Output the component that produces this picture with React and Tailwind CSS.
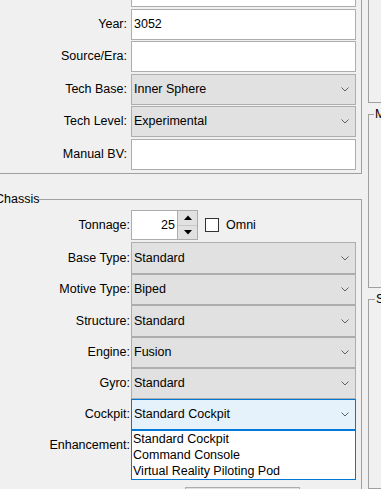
import React from "react";

const FIELD_BORDER = "border border-[#adadad]";

function Chevron() {
  return (
    <svg width="8" height="5" viewBox="0 0 8 5" className="shrink-0">
      <polyline points="0.5,0.5 4,4 7.5,0.5" fill="none" stroke="#606060" strokeWidth="1" />
    </svg>
  );
}

function TextField({ value }) {
  return (
    <div className={`w-[225px] h-full bg-white ${FIELD_BORDER} flex items-center pl-[2px]`}>
      {value}
    </div>
  );
}

function Combo({ value, active }) {
  return (
    <div
      className={`w-[225px] h-full flex items-center justify-between pl-[2px] pr-[6px] border ${
        active ? "bg-[#e5f1fb] border-[#0078d7]" : "bg-[#e1e1e1] border-[#adadad]"
      }`}
    >
      <span>{value}</span>
      <Chevron />
    </div>
  );
}

function InfoRow({ label, children, className = "" }) {
  return (
    <div className={`flex items-center h-[31px] ${className}`}>
      <div className="w-[127px] text-right">{label}</div>
      <div className="ml-[4px] h-full">{children}</div>
    </div>
  );
}

function ChassisRow({ label, children, className = "" }) {
  return (
    <div className={`flex items-center ${className}`}>
      <div className="w-[135px] text-right">{label}</div>
      <div className="ml-[1px] h-full relative">{children}</div>
    </div>
  );
}

function Spinner({ value }) {
  return (
    <div className="flex h-[30px]">
      <div className="w-[46px] h-full bg-white border border-[#adadad] border-r-0 flex items-center justify-end pr-[2px]">
        {value}
      </div>
      <div className="w-[21px] h-full flex flex-col border border-[#adadad] bg-[#e1e1e1]">
        <div className="flex-1 flex items-center justify-center border-b border-[#c8c8c8]">
          <svg width="8" height="5" viewBox="0 0 8 5">
            <polygon points="0,5 4,0.5 8,5" fill="#000" />
          </svg>
        </div>
        <div className="flex-1 flex items-center justify-center">
          <svg width="8" height="5" viewBox="0 0 8 5">
            <polygon points="0,0 8,0 4,4.5" fill="#000" />
          </svg>
        </div>
      </div>
    </div>
  );
}

export default function App() {
  const cockpitOptions = ["Standard Cockpit", "Command Console", "Virtual Reality Piloting Pod"];

  return (
    <div className="w-[381px] h-[489px] overflow-hidden bg-[#f0f0f0] flex font-['Liberation_Sans',sans-serif] text-[12.5px] text-black leading-none">
      {/* left column */}
      <div className="w-[362px] shrink-0 flex flex-col">
        {/* info panel */}
        <div className="h-[174px] border-r border-b border-[#a0a0a0] flex flex-col shrink-0">
          <div className="ml-[131px] w-[225px] h-[7px] bg-white border-x border-b border-[#adadad] shrink-0" />
          <InfoRow label="Year:" className="mt-[2px]">
            <TextField value="3052" />
          </InfoRow>
          <InfoRow label="Source/Era:" className="mt-[1px]">
            <TextField value="" />
          </InfoRow>
          <InfoRow label="Tech Base:" className="mt-[2px]">
            <Combo value="Inner Sphere" />
          </InfoRow>
          <InfoRow label="Tech Level:" className="mt-[1px]">
            <Combo value="Experimental" />
          </InfoRow>
          <InfoRow label="Manual BV:" className="mt-[2px]">
            <TextField value="" />
          </InfoRow>
        </div>

        {/* chassis */}
        <fieldset className="mt-[18px] -ml-[12px] w-[374px] flex-1 border border-[#a0a0a0] pl-[6px] pt-[4px]">
          <legend className="leading-[14px]">Chassis</legend>

          <ChassisRow label="Tonnage:" className="h-[30px]">
            <div className="flex items-center h-full">
              <Spinner value="25" />
              <div className="ml-[7px] w-[14px] h-[14px] bg-white border border-[#333333]" />
              <span className="ml-[7px]">Omni</span>
            </div>
          </ChassisRow>

          <ChassisRow label="Base Type:" className="h-[32px] mt-[2px]">
            <Combo value="Standard" />
          </ChassisRow>
          <ChassisRow label="Motive Type:" className="h-[31px]">
            <Combo value="Biped" />
          </ChassisRow>
          <ChassisRow label="Structure:" className="h-[32px]">
            <Combo value="Standard" />
          </ChassisRow>
          <ChassisRow label="Engine:" className="h-[31px]">
            <Combo value="Fusion" />
          </ChassisRow>
          <ChassisRow label="Gyro:" className="h-[31px]">
            <Combo value="Standard" />
          </ChassisRow>
          <ChassisRow label="Cockpit:" className="h-[31px] relative z-10">
            <Combo value="Standard Cockpit" active />
            <div className="absolute left-0 top-full w-[225px] bg-white border border-[#0078d7]">
              {cockpitOptions.map((opt) => (
                <div key={opt} className="h-[16px] flex items-center pl-[1px]">
                  {opt}
                </div>
              ))}
            </div>
          </ChassisRow>
          <ChassisRow label="Enhancement:" className="h-[31px]">
            <Combo value="None" />
          </ChassisRow>
          <div className="ml-[190px] mt-[26px] w-[115px] h-[20px] border-t border-x border-[#adadad] bg-[#e1e1e1]" />
        </fieldset>
      </div>

      {/* right column */}
      <div className="flex-1 flex flex-col pl-[6px]">
        <div className="h-[103px] border-l border-b border-[#a0a0a0] shrink-0" />
        <fieldset className="mt-[4px] h-[181px] border border-[#a0a0a0] pl-[5px] shrink-0">
          <legend className="leading-[14px] px-[1px]">M</legend>
        </fieldset>
        <fieldset className="mt-[4px] flex-1 border border-[#a0a0a0] pl-[6px]">
          <legend className="leading-[14px] px-[1px]">S</legend>
        </fieldset>
      </div>
    </div>
  );
}
